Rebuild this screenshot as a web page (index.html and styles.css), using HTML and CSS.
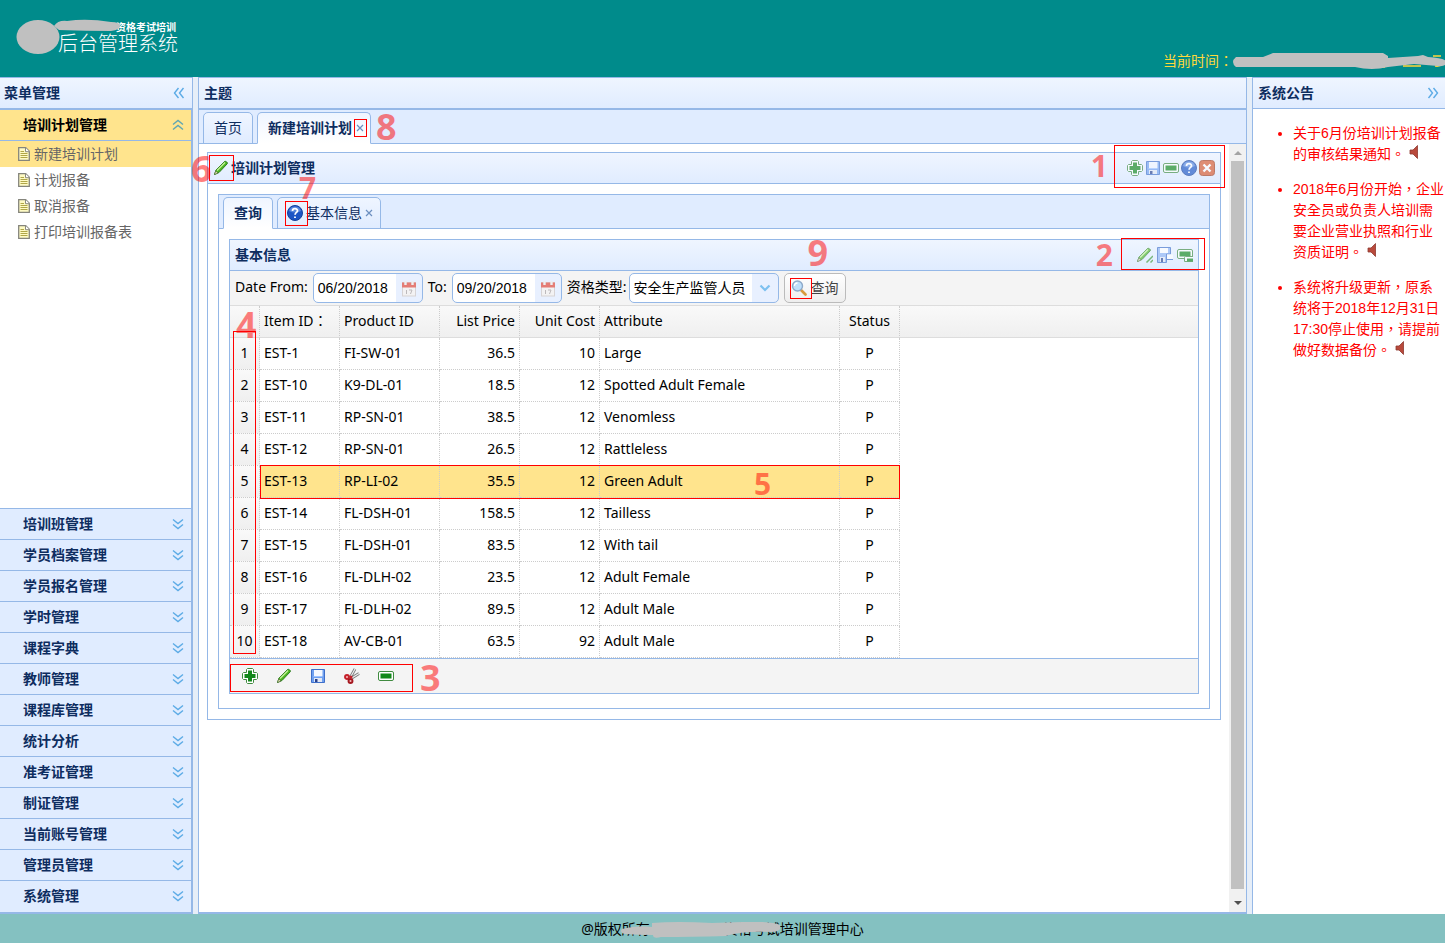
FILE: index.html
```html
<!DOCTYPE html>
<html lang="zh-CN">
<head>
    <meta charset="UTF-8">
    <meta name="viewport" content="width=device-width, initial-scale=1.0">
    <title>后台管理系统</title>
    <link rel="stylesheet" href="styles.css">
</head>
<body>

    <!-- Icon set -->
    <svg class="sprite" aria-hidden="true">
        <symbol id="i-add" viewBox="0 0 16 16">
            <path d="M5.500 .5h5l1 1v3h3l1 1v5l-1 1h-3v3l-1 1h-5l-1-1v-3h-3l-1-1v-5l1-1h3v-3z" fill="#fff" stroke="#3f8a3f"/>
            <path d="M6 2.500h4v3.500h3.500v4H10v3.500H6V10H2.500V6H6z" fill="#12881a"/>
        </symbol>
        <symbol id="i-edit" viewBox="0 0 16 16">
            <path d="M1.500 14.500l1.500-4.500L11.500 1.500c1-.8 3.500 1 2.800 2.200L6 12.500z" fill="#4cb71f" stroke="#2f7d22"/>
            <path d="M4 10.500L12 2.500" stroke="#c3f09a" stroke-width="1.500"/>
            <path d="M1.500 14.500l1.200-3.500 2.300 2z" fill="#f2e6c0" stroke="#44642f" stroke-width=".6"/>
        </symbol>
        <symbol id="i-save" viewBox="0 0 16 16">
            <path d="M1.500 1.500h13v13h-13z" fill="#6fa0f0" stroke="#3f6fc9"/>
            <path d="M4 2h8.500v6H4z" fill="#f4f8ff"/>
            <path d="M3.500 8.500h9" stroke="#9fc3ff"/>
            <path d="M4 10h8v4H4z" fill="#e3e9f5"/>
            <path d="M5 11h2.500v3H5z" fill="#28408c"/>
        </symbol>
        <symbol id="i-cut" viewBox="0 0 16 16">
            <path d="M6 10L11 1M7 10.500l8-5" stroke="#777" stroke-width="2.800"/>
            <path d="M6 10L11 1M7 10.500l8-5" stroke="#eee" stroke-width="1.200"/>
            <circle cx="3" cy="9" r="2" fill="#f3b8b8" stroke="#c5202a" stroke-width="1.900"/>
            <circle cx="6.500" cy="13" r="2" fill="#f3b8b8" stroke="#a51820" stroke-width="1.900"/>
            <circle cx="7" cy="9" r="1.500" fill="#c5202a"/>
        </symbol>
        <symbol id="i-remove" viewBox="0 0 16 16">
            <rect x=".5" y="3.500" width="15" height="9" rx="1.500" fill="#fff" stroke="#3f8a3f"/>
            <rect x="2.500" y="5.500" width="11" height="5" fill="#12881a"/>
        </symbol>
        <symbol id="i-help" viewBox="0 0 16 16">
            <circle cx="8" cy="8" r="7.500" fill="#1c55c4" stroke="#14409c"/>
            <path d="M2 6a6.300 6.300 0 0 1 12 0q-6 3-12 0z" fill="#7fa9ec" opacity=".6"/>
            <path d="M5.500 6c0-3.200 5-3 5-.3 0 1.800-2.400 1.700-2.400 4M8 11.500v1.600" fill="none" stroke="#fff" stroke-width="1.800"/>
        </symbol>
        <symbol id="i-cancel" viewBox="0 0 16 16">
            <rect x=".5" y=".5" width="15" height="15" rx="3" fill="#d9582b" stroke="#a63c18"/>
            <path d="M4.500 4.500l7 7M11.500 4.500l-7 7" stroke="#fff" stroke-width="2.400"/>
        </symbol>
        <symbol id="i-search" viewBox="0 0 16 16">
            <path d="M10 10l4.500 4.500" stroke="#d79a3c" stroke-width="2.600" stroke-linecap="round"/>
            <circle cx="6.500" cy="6" r="5" fill="#bfe0fb" stroke="#8ea9c9" stroke-width="1.400"/>
            <path d="M3.500 6a3 3 0 0 1 3-3" stroke="#fff" fill="none" stroke-width="1.300"/>
        </symbol>
        <symbol id="i-date" viewBox="0 0 16 16">
            <rect x="1.500" y="2" width="13" height="13.500" fill="#f6f3f2" stroke="#d5cfcd"/>
            <path d="M1 2h14v5H1z" fill="#e4695f"/>
            <path d="M4.500 .5v4M11.500 .5v4" stroke="#eee" stroke-width="2.400"/>
            <path d="M5.500 9.500v4M8 9.500h3l-1.500 4" stroke="#b5b0b0" fill="none"/>
        </symbol>
        <symbol id="i-file" viewBox="0 0 12 14">
            <path d="M.7.700h7l3.600 3.600v9H.7z" fill="#fffbc4" stroke="#85857c" stroke-width="1.300"/>
            <path d="M7.500 .7v4h4" fill="#fff" stroke="#8a8a80"/>
            <path d="M2.500 4.500h3.500M2.500 6.500h7M2.500 8.500h7M2.500 10.500h7" stroke="#b0a648"/>
        </symbol>
        <symbol id="i-sound" viewBox="0 0 14 14">
            <path d="M1 5h3l4.500-4.500v13L4 9H1z" fill="#b94a3c" stroke="#8e3a30" stroke-width=".8"/>
        </symbol>
        <symbol id="i-down" viewBox="0 0 12 12">
            <path d="M1 1.500l5 4 5-4M1 6.500l5 4 5-4" fill="none" stroke="#5cabe6" stroke-width="1.400"/>
        </symbol>
        <symbol id="i-up" viewBox="0 0 12 12">
            <path d="M1 5.500l5-4 5 4M1 10.500l5-4 5 4" fill="none" stroke="#5fa6b4" stroke-width="1.400"/>
        </symbol>
        <symbol id="i-left" viewBox="0 0 12 12">
            <path d="M5.500 1l-4 5 4 5M10.500 1l-4 5 4 5" fill="none" stroke="#5cabe6" stroke-width="1.400"/>
        </symbol>
        <symbol id="i-right" viewBox="0 0 12 12">
            <path d="M1.500 1l4 5-4 5M6.500 1l4 5-4 5" fill="none" stroke="#5cabe6" stroke-width="1.400"/>
        </symbol>
        <symbol id="i-close" viewBox="0 0 8 8">
            <path d="M1 1l6 6M7 1l-6 6" stroke="#6b8fc0" stroke-width="1.200"/>
        </symbol>
        <!-- small buttons show the start of a second copy -->
        <symbol id="i-edit-2" viewBox="0 0 16 16">
            <use href="#i-edit" x="-1" width="16" height="16"/>
            <path d="M9.500 15.500L16 9M13.500 15.500L16 13" stroke="#3f9a35" stroke-width="1.500"/>
        </symbol>
        <symbol id="i-save-2" viewBox="0 0 16 16">
            <path d="M.5 15.500v-15h13V7H9.500v8.500z" fill="#8fb4f3" stroke="#3f6fc9"/>
            <path d="M3 1h8v5H3z" fill="#fff"/>
            <path d="M3 10h5v5H3z" fill="#e3e9f5"/>
            <path d="M4 11h2v4H4z" fill="#28408c"/>
            <path d="M10 7.500h6v5h-6z" fill="#fff"/>
            <path d="M9.500 12.500H16" stroke="#3f6fc9"/>
        </symbol>
        <symbol id="i-remove-2" viewBox="0 0 16 16">
            <use href="#i-remove" y="-1" width="16" height="16"/>
            <path d="M16 9.500H8.500q-1 0-1 1v4H16" fill="#fff" stroke="#3f8a3f"/>
            <path d="M10 11.500h6v3h-6z" fill="#12881a"/>
        </symbol>
    </svg>

    <header class="top">
        <div class="logo">
            <svg class="logo-mark" viewBox="0 0 104 38" aria-hidden="true">
                <ellipse cx="22" cy="18" rx="21.500" ry="17" fill="#c0c0c0"/>
                <path d="M38 7q4-6 13-5 20-3 44 1 9 0 9 4t-9 5q-25 0-52-1z" fill="#c0c0c0"/>
            </svg>
            <div class="logo-text">
                <span class="logo-small">资格考试培训</span>
                <span class="logo-big">后台管理系统</span>
            </div>
        </div>
        <div class="clock">
            <span lang="zh-TW">当前时间：</span>
            <svg class="clock-smear" viewBox="0 0 212 18" aria-hidden="true">
                <path d="M54 14h4M75 14h8M200 4h8M140 15h12M170 14h18M202 14q8 1 6-5" stroke="#ffd83b" fill="none" stroke-width="1.500"/>
                <path d="M3 5h27l10-4h110l5 3v2l30-2 5-1 5 2q17 1 19 5-1 5-9 4l-24-2-26 3q-16 4-33 0L3 15q-6-5 0-10z" fill="#c0c0c0"/>
            </svg>
        </div>
    </header>

    <main class="layout">

        <!-- Left menu -->
        <nav class="west">
            <div class="bar">菜单管理<svg class="arrow"><use href="#i-left"/></svg></div>
            <div class="accordion">
                <button type="button" class="acc-head selected">培训计划管理<svg class="arrow"><use href="#i-up"/></svg></button>
                <ul class="tree">
                    <li class="selected"><a href="#"><svg><use href="#i-file"/></svg>新建培训计划</a></li>
                    <li><a href="#"><svg><use href="#i-file"/></svg>计划报备</a></li>
                    <li><a href="#"><svg><use href="#i-file"/></svg>取消报备</a></li>
                    <li><a href="#"><svg><use href="#i-file"/></svg>打印培训报备表</a></li>
                </ul>
                <button type="button" class="acc-head">培训班管理<svg class="arrow"><use href="#i-down"/></svg></button>
                <button type="button" class="acc-head">学员档案管理<svg class="arrow"><use href="#i-down"/></svg></button>
                <button type="button" class="acc-head">学员报名管理<svg class="arrow"><use href="#i-down"/></svg></button>
                <button type="button" class="acc-head">学时管理<svg class="arrow"><use href="#i-down"/></svg></button>
                <button type="button" class="acc-head">课程字典<svg class="arrow"><use href="#i-down"/></svg></button>
                <button type="button" class="acc-head">教师管理<svg class="arrow"><use href="#i-down"/></svg></button>
                <button type="button" class="acc-head">课程库管理<svg class="arrow"><use href="#i-down"/></svg></button>
                <button type="button" class="acc-head">统计分析<svg class="arrow"><use href="#i-down"/></svg></button>
                <button type="button" class="acc-head">准考证管理<svg class="arrow"><use href="#i-down"/></svg></button>
                <button type="button" class="acc-head">制证管理<svg class="arrow"><use href="#i-down"/></svg></button>
                <button type="button" class="acc-head">当前账号管理<svg class="arrow"><use href="#i-down"/></svg></button>
                <button type="button" class="acc-head">管理员管理<svg class="arrow"><use href="#i-down"/></svg></button>
                <button type="button" class="acc-head last">系统管理<svg class="arrow"><use href="#i-down"/></svg></button>
            </div>
        </nav>

        <!-- Work area -->
        <section class="center">
            <div class="bar">主题</div>
            <div class="tabs">
                <button type="button" class="tab">首页</button>
                <button type="button" class="tab active closable">新建培训计划<span class="marked"><svg class="close"><use href="#i-close"/></svg><i class="box box-8"></i><b class="num num-8">8</b></span></button>
            </div>
            <div class="scroller">
                <div class="content">
                    <div class="panel">
                        <div class="panel-head">
                            <span class="marked"><svg class="icon"><use href="#i-edit"/></svg><i class="box box-6"></i><b class="num num-6">6</b></span>
                            <span>培训计划管理</span>
                            <div class="tools">
                                <button type="button" aria-label="添加"><svg class="icon"><use href="#i-add"/></svg></button>
                                <button type="button" aria-label="保存"><svg class="icon"><use href="#i-save"/></svg></button>
                                <button type="button" aria-label="移除"><svg class="icon"><use href="#i-remove"/></svg></button>
                                <button type="button" aria-label="帮助"><svg class="icon"><use href="#i-help"/></svg></button>
                                <button type="button" aria-label="关闭"><svg class="icon"><use href="#i-cancel"/></svg></button>
                            </div>
                            <i class="box box-1"></i><b class="num num-1">1</b>
                        </div>
                        <div class="panel-body">
                            <div class="tab-panel">
                                <div class="tabs">
                                    <button type="button" class="tab active">查询</button>
                                    <button type="button" class="tab with-icon"><span class="marked"><svg class="icon"><use href="#i-help"/></svg><i class="box box-7"></i><b class="num num-7">7</b></span>基本信息<svg class="close"><use href="#i-close"/></svg></button>
                                </div>
                                <div class="tab-body">
                                    <div class="panel">
                                        <div class="panel-head">
                                            <span>基本信息</span>
                                            <div class="tools wide">
                                                <button type="button" aria-label="编辑"><svg class="icon"><use href="#i-edit-2"/></svg></button>
                                                <button type="button" aria-label="保存"><svg class="icon"><use href="#i-save-2"/></svg></button>
                                                <button type="button" aria-label="移除"><svg class="icon"><use href="#i-remove-2"/></svg></button>
                                            </div>
                                            <i class="box box-2"></i><b class="num num-2">2</b>
                                        </div>

                                        <form class="toolbar" action="#">
                                            <label for="from">Date From:</label>
                                            <span class="field date"><input type="text" id="from" value="06/20/2018"><svg><use href="#i-date"/></svg></span>
                                            <label for="to">To:</label>
                                            <span class="field date"><input type="text" id="to" value="09/20/2018"><svg><use href="#i-date"/></svg></span>
                                            <label for="kind">资格类型:</label>
                                            <span class="field combo">
                                                <select id="kind"><option>安全生产监管人员</option></select>
                                                <svg viewBox="0 0 12 8"><path d="M1.500 1.500L6 6l4.500-4.500" fill="none" stroke="#7cc0f0" stroke-width="2.200"/></svg>
                                            </span>
                                            <button type="button" class="search"><span class="marked"><svg class="icon"><use href="#i-search"/></svg><i class="box box-9"></i><b class="num num-9">9</b></span>查询</button>
                                        </form>

                                        <div class="grid">
                                            <table>
                                                <colgroup>
                                                    <col class="c-no"><col class="c-80"><col class="c-100"><col class="c-80"><col class="c-80"><col class="c-240"><col class="c-60"><col>
                                                </colgroup>
                                                <thead>
                                                    <tr><th></th><th lang="zh-TW">Item ID：</th><th>Product ID</th><th class="right">List Price</th><th class="right">Unit Cost</th><th>Attribute</th><th class="mid">Status</th><th class="rest"></th></tr>
                                                </thead>
                                                <tbody>
                                                    <tr><td class="no">1</td><td>EST-1</td><td>FI-SW-01</td><td class="right">36.5</td><td class="right">10</td><td>Large</td><td class="mid">P</td></tr>
                                                    <tr><td class="no">2</td><td>EST-10</td><td>K9-DL-01</td><td class="right">18.5</td><td class="right">12</td><td>Spotted Adult Female</td><td class="mid">P</td></tr>
                                                    <tr><td class="no">3</td><td>EST-11</td><td>RP-SN-01</td><td class="right">38.5</td><td class="right">12</td><td>Venomless</td><td class="mid">P</td></tr>
                                                    <tr><td class="no">4</td><td>EST-12</td><td>RP-SN-01</td><td class="right">26.5</td><td class="right">12</td><td>Rattleless</td><td class="mid">P</td></tr>
                                                    <tr class="picked"><td class="no">5</td><td>EST-13</td><td>RP-LI-02</td><td class="right">35.5</td><td class="right">12</td><td>Green Adult</td><td class="mid">P</td></tr>
                                                    <tr><td class="no">6</td><td>EST-14</td><td>FL-DSH-01</td><td class="right">158.5</td><td class="right">12</td><td>Tailless</td><td class="mid">P</td></tr>
                                                    <tr><td class="no">7</td><td>EST-15</td><td>FL-DSH-01</td><td class="right">83.5</td><td class="right">12</td><td>With tail</td><td class="mid">P</td></tr>
                                                    <tr><td class="no">8</td><td>EST-16</td><td>FL-DLH-02</td><td class="right">23.5</td><td class="right">12</td><td>Adult Female</td><td class="mid">P</td></tr>
                                                    <tr><td class="no">9</td><td>EST-17</td><td>FL-DLH-02</td><td class="right">89.5</td><td class="right">12</td><td>Adult Male</td><td class="mid">P</td></tr>
                                                    <tr><td class="no">10</td><td>EST-18</td><td>AV-CB-01</td><td class="right">63.5</td><td class="right">92</td><td>Adult Male</td><td class="mid">P</td></tr>
                                                </tbody>
                                            </table>
                                            <i class="box box-4"></i><b class="num num-4">4</b>
                                            <i class="box box-5"></i><b class="num num-5">5</b>
                                        </div>

                                        <div class="actions">
                                            <button type="button" aria-label="添加"><svg class="icon"><use href="#i-add"/></svg></button>
                                            <button type="button" aria-label="编辑"><svg class="icon"><use href="#i-edit"/></svg></button>
                                            <button type="button" aria-label="保存"><svg class="icon"><use href="#i-save"/></svg></button>
                                            <button type="button" aria-label="剪切"><svg class="icon"><use href="#i-cut"/></svg></button>
                                            <button type="button" aria-label="移除"><svg class="icon"><use href="#i-remove"/></svg></button>
                                            <i class="box box-3"></i><b class="num num-3">3</b>
                                        </div>
                                    </div>
                                </div>
                            </div>
                        </div>
                    </div>
                </div>
                <div class="scrollbar" aria-hidden="true">
                    <svg viewBox="0 0 17 17"><path d="M5 11h8L9 7z" fill="#a3a3a3"/></svg>
                    <div class="thumb"></div>
                    <svg class="end" viewBox="0 0 17 17"><path d="M5 6h8l-4 4z" fill="#505050"/></svg>
                </div>
            </div>
        </section>

        <!-- Notices -->
        <aside class="east">
            <div class="bar">系统公告<svg class="arrow"><use href="#i-right"/></svg></div>
            <ul class="notices" lang="zh-TW">
                <li>关于6月份培训计划报备的审核结果通知。 <svg><use href="#i-sound"/></svg></li>
                <li>2018年6月份开始，企业安全员或负责人培训需要企业营业执照和行业资质证明。 <svg><use href="#i-sound"/></svg></li>
                <li>系统将升级更新，原系统将于2018年12月31日17:30停止使用，请提前做好数据备份。 <svg><use href="#i-sound"/></svg></li>
            </ul>
        </aside>
    </main>

    <footer class="bottom">
        <span>@版权所有</span>
        <span class="gap">
            <svg class="footer-smear" viewBox="0 0 160 16" aria-hidden="true">
                <path d="M2 7q14-4 30-2V1q25-2 60 0l30-1q30-1 38 3 3 6-8 7-30-1-46 4-35 1-65 1-8 2-8-2-14 0-28-1-6-2-3-5z" fill="#c0c0c0"/>
            </svg>
        </span>
        <span>资格考试培训管理中心</span>
    </footer>

</body>
</html>
```
FILE: styles.css
```css
* {
    box-sizing: border-box;
    margin: 0;
    padding: 0;
}

body {
    display: flex;
    flex-direction: column;
    min-height: 100vh;
    font-family: "Noto Sans", "Noto Sans CJK SC", sans-serif;
    font-size: 14px;
    line-height: 20px;
    color: #000;
    background-color: #fff;
}

button,
input,
select {
    font: inherit;
    color: inherit;
    border: none;
    background: none;
}

ul {
    list-style: none;
}

svg {
    display: block;
    flex: none;
}

.sprite {
    position: absolute;
    width: 0;
    height: 0;
}

.icon {
    width: 16px;
    height: 16px;
}

/* Header */
.top {
    display: flex;
    justify-content: space-between;
    height: 77px;
    background-color: #008b8b;
}

.logo {
    position: relative;
    padding: 20px 0 0 58px;
    color: #fff;
}

.logo-mark {
    position: absolute;
    left: 16px;
    top: 19px;
    width: 104px;
    height: 38px;
}

.logo-text {
    display: flex;
    flex-direction: column;
    align-items: flex-end;
}

.logo-small {
    padding-right: 2px;
    font-size: 10px;
    line-height: 14px;
    font-weight: bold;
}

.logo-big {
    font-size: 20px;
    line-height: 20px;
    font-weight: 300;
}

.clock {
    display: flex;
    align-items: center;
    align-self: flex-end;
    height: 32px;
    color: #ffd83b;
}

.clock-smear {
    width: 212px;
    height: 18px;
}

/* Layout */
.layout {
    display: flex;
    flex: 1;
    gap: 5px;
    background-color: #e6eef8;
}

.bar {
    display: flex;
    align-items: center;
    justify-content: space-between;
    height: 33px;
    padding: 0 6px 0 5px;
    border-top: 1px solid #95b8e7;
    border-bottom: 2px solid #95b8e7;
    background: linear-gradient(#eff5ff, #e0ecff);
    color: #0e2d5f;
    font-weight: bold;
}

.arrow {
    width: 12px;
    height: 12px;
}

/* Left menu */
.west {
    display: flex;
    flex-direction: column;
    width: 193px;
    border-right: 1px solid #95b8e7;
    background-color: #fff;
}

.west .bar {
    padding-left: 4px;
    padding-right: 7px;
}

.accordion {
    display: flex;
    flex: 1;
    flex-direction: column;
    border-right: 1px solid #95b8e7;
    border-bottom: 2px solid #95b8e7;
}

.acc-head {
    display: flex;
    align-items: center;
    justify-content: space-between;
    height: 31px;
    padding: 0 7px 0 23px;
    border-top: 1px solid #95b8e7;
    background-color: #e0ecff;
    color: #0e2d5f;
    font-weight: bold;
}

.acc-head.selected {
    border-top: none;
    border-bottom: 1px solid #95b8e7;
    background-color: #ffe48d;
    color: #000;
}

.acc-head.last {
    height: 32px;
    padding-bottom: 1px;
}

.tree {
    flex: 1;
}

.tree li {
    height: 26px;
}

.tree .selected {
    background-color: #ffe48d;
}

.tree a {
    display: flex;
    align-items: center;
    gap: 4px;
    height: 26px;
    padding-left: 18px;
    color: #666;
    text-decoration: none;
}

.tree svg {
    width: 12px;
    height: 14px;
}

/* Work area */
.center {
    display: flex;
    flex: 1;
    flex-direction: column;
    min-width: 0;
    border: 1px solid #95b8e7;
    border-top: none;
    border-bottom-width: 2px;
    background-color: #fff;
}

.tabs {
    display: flex;
    gap: 4px;
    height: 34px;
    padding: 2px 4px 0;
    border-bottom: 1px solid #95b8e7;
    background-color: #e0ecff;
}

.tab {
    display: flex;
    align-items: center;
    gap: 3px;
    height: 32px;
    padding: 0 10px;
    border: 1px solid #95b8e7;
    border-radius: 5px 5px 0 0;
    background: linear-gradient(#eff5ff, #e0ecff);
    color: #0e2d5f;
}

.tab.active {
    border-bottom-color: #fff;
    background: linear-gradient(#eff5ff, #fff);
    font-weight: bold;
}

.tab.closable {
    gap: 4px;
    padding-right: 6px;
}

.tab .close {
    width: 8px;
    height: 8px;
}

.tab.with-icon {
    padding: 0 7px 0 9px;
}

.scroller {
    display: flex;
    flex: 1;
}

.content {
    flex: 1;
    min-width: 0;
    padding: 8px;
}

.scrollbar {
    display: flex;
    flex-direction: column;
    width: 17px;
    background-color: #f1f1f1;
}

.scrollbar svg {
    width: 17px;
    height: 17px;
}

.scrollbar .end {
    margin-top: 6px;
}

.thumb {
    flex: 1;
    margin: 0 2px;
    background-color: #c1c1c1;
}

/* Panels */
.panel {
    border: 1px solid #95b8e7;
}

.panel-head {
    position: relative;
    display: flex;
    align-items: center;
    gap: 2px;
    height: 31px;
    padding: 0 5px;
    border-bottom: 1px solid #95b8e7;
    background: linear-gradient(#eff5ff, #e0ecff);
    color: #0e2d5f;
    font-weight: bold;
}

.tools {
    display: flex;
    gap: 2px;
    margin-left: auto;
    opacity: 0.65;
}

.tools.wide {
    gap: 4px;
}

.panel-body {
    padding: 10px;
}

.tab-panel {
    border: 1px solid #95b8e7;
}

.tab-body {
    padding: 10px 10px 14px;
}

/* Search form */
.toolbar {
    display: flex;
    align-items: center;
    gap: 5px;
    height: 35px;
    padding: 0 5px;
    border-bottom: 1px solid #ddd;
    background-color: #f4f4f4;
}

.toolbar label {
    padding-bottom: 2px;
}

.field {
    display: flex;
    align-items: center;
    justify-content: flex-end;
    position: relative;
    height: 30px;
    border: 1px solid #95b8e7;
    border-radius: 5px;
    background: linear-gradient(to left, #e8f0ff 26px, #fff 26px);
    font-family: "Liberation Sans", "Noto Sans CJK SC", sans-serif;
}

.field input,
.field select {
    flex: 1;
    min-width: 0;
    height: 28px;
    padding-left: 4px;
    appearance: none;
}

.date {
    width: 110px;
}

.date svg {
    width: 16px;
    height: 17px;
    margin-right: 5px;
    opacity: 0.85;
}

.combo {
    width: 150px;
    margin-left: -3px;
}

.combo svg {
    width: 12px;
    height: 8px;
    margin-right: 7px;
}

.search {
    display: flex;
    align-items: center;
    gap: 4px;
    height: 30px;
    padding: 0 6px;
    border: 1px solid #bbb;
    border-radius: 5px;
    background: linear-gradient(#fff, #eee);
    color: #444;
}

/* Data grid */
.grid {
    position: relative;
}

.grid table {
    width: 100%;
    table-layout: fixed;
    border-spacing: 0;
}

.c-no {
    width: 30px;
}

.c-60 {
    width: 60px;
}

.c-80 {
    width: 80px;
}

.c-100 {
    width: 100px;
}

.c-240 {
    width: 240px;
}

.grid thead {
    background: linear-gradient(#f9f9f9, #efefef);
}

.grid th,
.grid td {
    height: 32px;
    padding: 0 4px 2px;
    border-right: 1px dotted #ccc;
    border-bottom: 1px dotted #ccc;
    font-weight: normal;
    text-align: left;
    white-space: nowrap;
}

.grid th {
    border-bottom: 1px solid #ddd;
}

.grid th.rest {
    border-right: none;
}

.grid .right {
    text-align: right;
}

.grid .mid {
    text-align: center;
}

.grid .no {
    padding: 0 0 2px;
    background: linear-gradient(#f9f9f9, #efefef);
    text-align: center;
}

.grid .picked td:not(.no) {
    background-color: #ffe48d;
}

.actions {
    position: relative;
    display: flex;
    height: 35px;
    padding: 0 3px;
    border-top: 1px solid #95b8e7;
    background-color: #f4f4f4;
}

.actions button {
    display: flex;
    align-items: center;
    justify-content: center;
    width: 34px;
}

/* Notices */
.east {
    width: 193px;
    border-left: 1px solid #95b8e7;
    background-color: #fff;
}

.east .bar {
    height: 32px;
    border-bottom-width: 1px;
}

.notices {
    padding: 14px 0 0 40px;
    list-style: disc;
    color: #f00;
    font-family: "Liberation Sans", "Noto Sans CJK SC", sans-serif;
    line-height: 21px;
}

.notices li {
    margin-bottom: 14px;
}

.notices svg {
    display: inline-block;
    width: 14px;
    height: 14px;
}

/* Footer */
.bottom {
    display: flex;
    justify-content: center;
    height: 29px;
    padding-top: 5px;
    background-color: #84c1c1;
}

.gap {
    position: relative;
    width: 74px;
}

.footer-smear {
    position: absolute;
    left: -30px;
    top: 3px;
    width: 160px;
    height: 16px;
}

/* Review marks drawn over the page */
.marked {
    position: relative;
}

.box {
    position: absolute;
    border: 1px solid #f00;
    pointer-events: none;
}

.num {
    position: absolute;
    z-index: 1;
    color: rgba(255, 0, 0, 0.5);
    font-family: "Open Sans", sans-serif;
    font-size: 36px;
    line-height: 36px;
    font-weight: bold;
    pointer-events: none;
}

.box-1 {
    right: -5px;
    top: -8px;
    width: 111px;
    height: 43px;
}

.num-1 {
    right: 112px;
    top: -5px;
    font-size: 30px;
}

.box-2 {
    right: -7px;
    top: -2px;
    width: 84px;
    height: 32px;
}

.num-2 {
    right: 85px;
    top: -3px;
    font-size: 30px;
}

.box-3 {
    left: 0;
    top: 5px;
    width: 183px;
    height: 28px;
}

.num-3 {
    left: 190px;
    top: 1px;
}

.box-4 {
    left: 3px;
    top: 25px;
    width: 23px;
    height: 323px;
}

.num-4 {
    left: 6px;
    top: 1px;
}

.box-5 {
    left: 30px;
    top: 159px;
    width: 640px;
    height: 34px;
}

.num-5 {
    left: 524px;
    top: 160px;
    font-size: 30px;
}

.box-6 {
    left: -4px;
    top: -5px;
    width: 25px;
    height: 26px;
}

.num-6 {
    left: -22px;
    top: -9px;
}

.box-7 {
    left: -2px;
    top: -4px;
    width: 23px;
    height: 25px;
}

.num-7 {
    left: 12px;
    top: -35px;
    font-size: 30px;
}

.box-8 {
    left: -2px;
    top: -5px;
    width: 13px;
    height: 18px;
}

.num-8 {
    left: 20px;
    top: -15px;
}

.box-9 {
    left: -1px;
    top: -2px;
    width: 22px;
    height: 21px;
}

.num-9 {
    left: 17px;
    top: -45px;
}
```
